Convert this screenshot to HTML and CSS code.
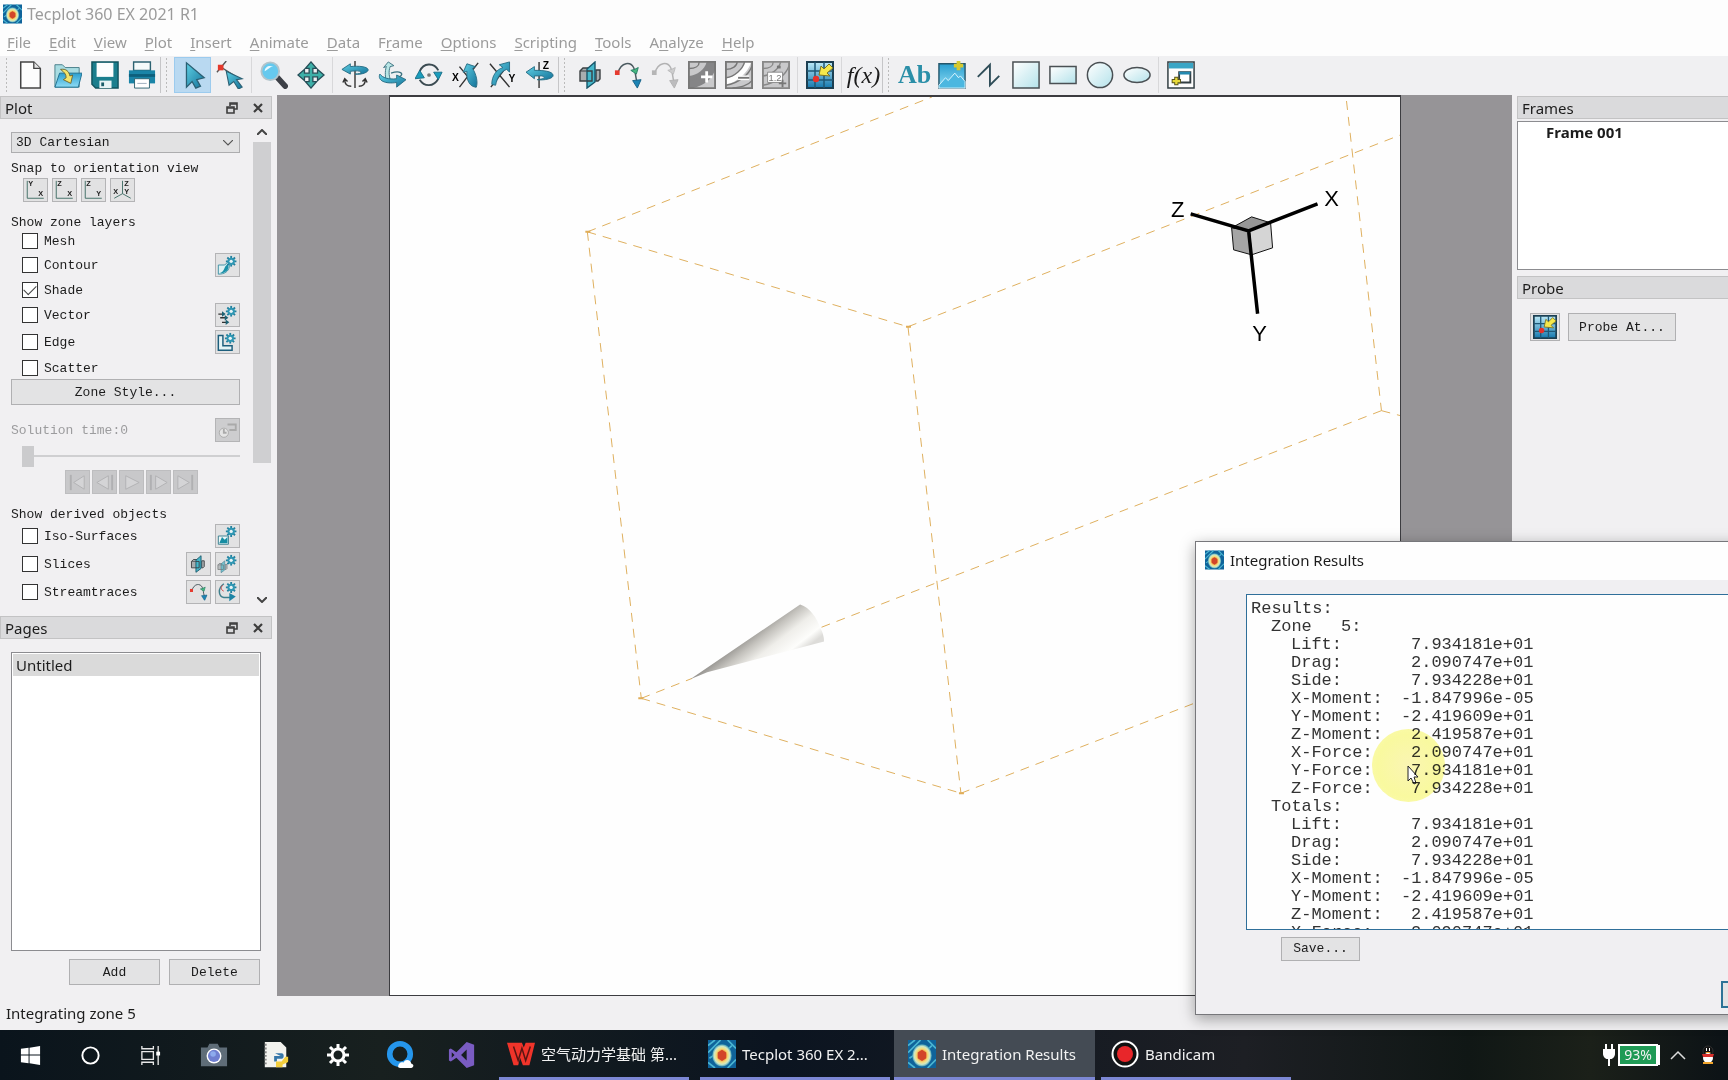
FILE: index.html
```html
<!DOCTYPE html>
<html lang="en">
<head>
<meta charset="utf-8">
<title>Tecplot 360 EX 2021 R1</title>
<link rel="stylesheet" href="styles.css">
</head>
<body>
<svg class="defs" width="0" height="0" aria-hidden="true">
  <defs>
    <linearGradient id="teal" x1="0" y1="0" x2="1" y2="1"><stop offset="0" stop-color="#5fd0e4"/><stop offset="1" stop-color="#14739a"/></linearGradient>
    <linearGradient id="pale" x1="0" y1="0" x2="1" y2="1"><stop offset="0" stop-color="#ffffff"/><stop offset="1" stop-color="#b4e2ea"/></linearGradient>
    <linearGradient id="grid" x1="0" y1="0" x2="0" y2="1"><stop offset="0" stop-color="#bdeaf8"/><stop offset="1" stop-color="#1478ae"/></linearGradient>
    <linearGradient id="sky" x1="0" y1="0" x2="0" y2="1"><stop offset="0" stop-color="#2a9fd0"/><stop offset="1" stop-color="#8fdcf4"/></linearGradient>
    <radialGradient id="glow"><stop offset="0" stop-color="#e0602c"/><stop offset=".4" stop-color="#f09a3c"/><stop offset=".6" stop-color="#f6dc7c"/><stop offset=".8" stop-color="#cfe8c4"/><stop offset="1" stop-color="#3a98b8"/></radialGradient>
  </defs>
  <symbol id="logo" viewBox="0 0 20 20"><rect width="20" height="20" fill="#0f639a"/><path d="M0 4L5 0M0 9L9 0M20 6L14 0M0 16L5 20M20 14L14 20M1 13L4 11M17 4L15 6" stroke="#4bb6d2" stroke-width="1.2"/><ellipse cx="10" cy="11" rx="7" ry="8" fill="url(#glow)"/><path d="M10 7l3 2v4l-3 2-3-2V9z" fill="#d2452a"/></symbol>
  <symbol id="gear" viewBox="0 0 12 12"><g stroke="#23819e" stroke-width="2"><path d="M6 0v12M0 6h12M1.800 1.800l8.400 8.400M10.200 1.800l-8.400 8.400"/></g><circle cx="6" cy="6" r="4" fill="#2f97b4"/><circle cx="6" cy="6" r="1.800" fill="#e8f4f6"/></symbol>
  <symbol id="slice" viewBox="0 0 28 28"><path d="M3 10l3-3h6v13H3zM19 9h4v9l-2 2h-2z" fill="#a9adaf" stroke="#3a3f42" stroke-width="1.400"/><path d="M3 10h8M11 10l2-3" stroke="#3a3f42" fill="none"/><path d="M10 8l8-7v20l-8 6z" fill="#45b8cb" stroke="#17566a" stroke-width="1.400"/><path d="M10 10h5v10h-5" fill="none" stroke="#3a3f42" stroke-width="1.400"/></symbol>
  <symbol id="stream" viewBox="0 0 30 28"><path d="M4 12C8-1 18 0 21 6s1 8 4 16" fill="none" stroke="#4b5a60" stroke-width="1.600"/><path d="M18 9l6 4 2-7-4 2z" fill="#45b87f" stroke="#287e66"/><path d="M20 20l9-1-4 9z" fill="#1c84b5" stroke="#156288"/><rect x="1" y="9" width="5" height="5" fill="#e53b30"/></symbol>
  <symbol id="probe" viewBox="0 0 28 28"><rect x="1" y="1" width="26" height="26" fill="url(#grid)" stroke="#1c3f52" stroke-width="2"/><path d="M9 1v26M18 1v26M1 10h26M1 19h26" stroke="#1f5876" stroke-width="1.500"/><circle cx="10" cy="18" r="3.200" fill="#e5322b"/><path d="M13 14l2-9 3 3 5-5 4 4-6 5 3 3z" fill="#f5e84b" stroke="#7b7324"/></symbol>
  <symbol id="restore" viewBox="0 0 12 12"><path d="M4 4V1h7v6H8" fill="none" stroke="#3c3c3c" stroke-width="1.600"/><path d="M1 5h7v6H1z" fill="none" stroke="#3c3c3c" stroke-width="1.600"/><path d="M1 6h7M4 2h7" stroke="#3c3c3c" stroke-width="1.500"/></symbol>
  <symbol id="cross" viewBox="0 0 12 12"><path d="M2 2l8 8M10 2l-8 8" stroke="#3c3c3c" stroke-width="2.200"/></symbol>
</svg>

<div class="app">
  <header class="titlebar">
    <svg class="logo" aria-hidden="true"><use href="#logo"/></svg>
    <span>Tecplot 360 EX 2021 R1</span>
  </header>

  <nav class="menubar">
    <button><u>F</u>ile</button><button><u>E</u>dit</button><button><u>V</u>iew</button><button><u>P</u>lot</button><button><u>I</u>nsert</button><button><u>A</u>nimate</button><button><u>D</u>ata</button><button>F<u>r</u>ame</button><button><u>O</u>ptions</button><button><u>S</u>cripting</button><button><u>T</u>ools</button><button>A<u>n</u>alyze</button><button><u>H</u>elp</button>
  </nav>

  <div class="toolbar">
    <i class="grip first"></i>
    <button aria-label="New"><svg viewBox="0 0 30 30"><path d="M4 1h14l7 7v21H4z" fill="#fdfdfd" stroke="#444" stroke-width="1.600"/><path d="M18 1v7h7" fill="#e4e4e4" stroke="#444" stroke-width="1.400"/></svg></button>
    <button aria-label="Open"><svg viewBox="0 0 30 30"><path d="M1 28V4h8l3 3h15v21z" fill="#a8dce2" stroke="#467c88"/><path d="M1 28l5-15h24l-4 15z" fill="url(#sky)" stroke="#1d6e8f"/><path d="M7 9c6-1 9 2 10 7l3-1-2 9-8-4 3-2c0-4-2-6-6-9z" fill="#f3e36a" stroke="#6b6530"/></svg></button>
    <button aria-label="Save"><svg viewBox="0 0 30 30"><path d="M1 1h28v28H5l-4-4z" fill="#1b7e8d" stroke="#11535e" stroke-width="1.500"/><path d="M6 2h18v15H6z" fill="#fdfdfd"/><path d="M9 21h13v8H9z" fill="#e9f4f5"/><path d="M11 23h3v4h-3z" fill="#1b5d69"/></svg></button>
    <button aria-label="Print"><svg viewBox="0 0 30 30"><path d="M6 1h18v9H6z" fill="#f4fafa" stroke="#2c6271" stroke-width="1.500"/><path d="M1 10h28v14H1z" fill="#1984a7"/><path d="M1 14h28v3H1z" fill="#0d5f7c"/><path d="M7 19h16v10H7z" fill="#fff" stroke="#2c6271"/><path d="M10 24h10" stroke="#9ab"/></svg></button>
    <i class="grip"></i>
    <button class="on" aria-label="Select"><svg viewBox="0 0 30 30"><path d="M8 2v26l6-6 4 7 5-2-4-7 8-2z" fill="url(#teal)" stroke="#2b6074" stroke-width="1.400"/></svg></button>
    <button aria-label="Adjust"><svg viewBox="0 0 30 30"><path d="M1 12L11 0M6 7L20 16" stroke="#555" stroke-width="1.500"/><rect x="2" y="4" width="6" height="6" fill="#e3382b"/><path d="M11 11l17 8-6 1 6 8-4 2-5-8-5 4z" fill="url(#teal)" stroke="#2b6074" stroke-width="1.200"/></svg></button>
    <i class="sep"></i>
    <button aria-label="Zoom"><svg viewBox="0 0 30 30"><path d="M19 18l8 9" stroke="#3d4047" stroke-width="6" stroke-linecap="round"/><circle cx="11" cy="11" r="9.500" fill="#66c9ee" stroke="#b2c4cb" stroke-width="2"/><path d="M5 11c0-5 5-7 9-5-3 0-6 4-9 5z" fill="#e8faff"/></svg></button>
    <button aria-label="Pan"><svg viewBox="0 0 30 30"><path d="M15 1l6 7h-4v5h5V9l7 6-7 6v-4h-5v5h4l-6 7-6-7h4v-5H8v4l-7-6 7-6v4h5V8H9z" fill="#3db0a8" stroke="#274e58" stroke-width="1.400"/></svg></button>
    <i class="sep"></i>
    <button aria-label="Rotate spherical"><svg viewBox="0 0 30 30"><path d="M15 0v29" stroke="#333" stroke-width="1.500"/><path d="M1 9l9-6v3c9-1 18 0 19 3s-7 6-14 5c6 0 8-2 5-3s-7 0-10 0v3z" fill="url(#teal)" stroke="#276d84"/><path d="M11 27c-5 0-7-3-7-7M19 27c5 0 7-3 7-7M2 23l2-4 3 3M23 22l3-3 2 4" fill="none" stroke="#333" stroke-width="1.500"/></svg></button>
    <button aria-label="Rotate rollerball"><svg viewBox="0 0 30 30"><path d="M9 23C7 15 8 8 9 6L6 7l5-6 6 4-4 1c-2 6-1 11 1 16z" fill="#b8e6e6" stroke="#3b7280"/><path d="M2 14c-3 7 6 11 18 9v5l10-8-10-5v4c-9 1-15-1-18-5z" fill="url(#teal)" stroke="#276d84"/><path d="M14 13c9-3 15 0 9 4" fill="none" stroke="#3b7280" stroke-width="1.500"/></svg></button>
    <button aria-label="Rotate twist"><svg viewBox="0 0 30 30"><path d="M5 11C9 2 20 1 25 10M25 19C20 28 10 28 5 20" fill="none" stroke="#3b4b52" stroke-width="2"/><path d="M0 19l5-9 5 8zM20 12l9 0-4 8z" fill="#1a9dbd" stroke="#1a6f88"/><circle cx="15" cy="15" r="2" fill="#777"/></svg></button>
    <button aria-label="Rotate X"><svg viewBox="0 0 30 30"><path d="M8 28L28 2M8 6l18 22" stroke="#333" stroke-width="1.500"/><path d="M12 12l4-9 9 3-3 2c4 6 6 15 4 20-7 0-11-8-10-17z" fill="url(#teal)" stroke="#276d84"/><text class="axis" x="0" y="21">X</text></svg></button>
    <button aria-label="Rotate Y"><svg viewBox="0 0 30 30"><path d="M1 3l21 25M2 28L22 2" stroke="#333" stroke-width="1.500"/><path d="M3 25C3 16 8 9 15 7l-4-3 11-3v11l-3-3c-6 2-10 8-12 17z" fill="url(#teal)" stroke="#276d84"/><text class="axis" x="21" y="22">Y</text></svg></button>
    <button aria-label="Rotate Z"><svg viewBox="0 0 30 30"><path d="M14 1v28" stroke="#333" stroke-width="1.500"/><path d="M0 12l9-6v4c10 0 19 1 20 5s-10 6-17 5c8-1 10-3 5-4H9v3z" fill="url(#teal)" stroke="#276d84"/><text class="axis" x="18" y="9">Z</text></svg></button>
    <i class="grip"></i>
    <button aria-label="Slice"><svg><use href="#slice"/></svg></button>
    <button aria-label="Streamtrace"><svg><use href="#stream"/></svg></button>
    <button class="dim" aria-label="Streamtrace termination"><svg><use href="#stream"/></svg></button>
    <button aria-label="Contour add"><svg viewBox="0 0 30 30"><path d="M1 1h28v28H1z" fill="#c9c9cb"/><path d="M1 20C13 18 23 10 26 1h3v9C25 20 18 26 6 29H1z" fill="#858587"/><path d="M1 16C10 15 18 9 20 1h7c-3 10-10 17-26 21z" fill="#858587"/><path d="M1 8C8 8 12 5 12 1" fill="none" stroke="#777" stroke-width="1.500"/><path d="M20 11v12M14 17h12" stroke="#fff" stroke-width="3"/><path d="M1 1h28v28H1z" fill="none" stroke="#777" stroke-width="2"/></svg></button>
    <button aria-label="Contour remove"><svg viewBox="0 0 30 30"><path d="M1 1h28v28H1z" fill="#c9c9cb"/><path d="M1 22C12 20 22 10 25 1" fill="none" stroke="#fff" stroke-width="6"/><path d="M1 9C8 9 13 5 13 1M1 18C10 17 19 9 21 1M1 26C15 24 26 14 29 5M8 29c8-1 16-2 21-8" fill="none" stroke="#777" stroke-width="1.500"/><path d="M14 18h12" stroke="#fff" stroke-width="5"/><path d="M14 18h12" stroke="#777" stroke-width="2"/><path d="M1 1h28v28H1z" fill="none" stroke="#777" stroke-width="2"/></svg></button>
    <button aria-label="Contour label"><svg viewBox="0 0 30 30"><path d="M1 1h28v28H1z" fill="#c9c9cb"/><path d="M1 8C8 8 12 5 12 1M1 16C10 15 18 9 20 1M1 26C15 24 26 14 29 5" fill="none" stroke="#888" stroke-width="1.500"/><path d="M16 5h4v3h-4z" fill="#777"/><path d="M6 12h16v11H6z" fill="#fff" stroke="#888"/><text class="mini" x="7" y="21">1.2</text><path d="M22 20v8M18 24h8" stroke="#777" stroke-width="2"/><path d="M1 1h28v28H1z" fill="none" stroke="#888" stroke-width="2"/></svg></button>
    <i class="sep"></i>
    <button aria-label="Probe"><svg><use href="#probe"/></svg></button>
    <i class="sep"></i>
    <button class="fx">f(x)</button>
    <i class="grip"></i>
    <button class="ab">Ab</button>
    <button aria-label="Image"><svg viewBox="0 0 30 30"><path d="M1 3h28v26H1z" fill="url(#sky)" stroke="#24566b" stroke-width="1.500"/><path d="M1 26l7-8 3 3 7-8 4 5 2-2 5 6v7H1z" fill="#4bb7e0" stroke="#dff6ff"/><path d="M22 0v10M17 5h10" stroke="#d6c92f" stroke-width="4"/></svg></button>
    <button aria-label="Polyline"><svg viewBox="0 0 30 30"><path d="M3 17L16 4v22l10-10" fill="none" stroke="#2f4d58" stroke-width="2"/></svg></button>
    <button aria-label="Square"><svg viewBox="0 0 30 30"><path d="M1 1h28v28H1z" fill="url(#pale)" stroke="#4a5054" stroke-width="1.600"/></svg></button>
    <button aria-label="Rectangle"><svg viewBox="0 0 30 30"><path d="M1 6h28v18H1z" fill="url(#pale)" stroke="#4a5054" stroke-width="1.600"/></svg></button>
    <button aria-label="Circle"><svg viewBox="0 0 30 30"><circle cx="15" cy="15" r="13.500" fill="url(#pale)" stroke="#4a5054" stroke-width="1.600"/></svg></button>
    <button aria-label="Ellipse"><svg viewBox="0 0 30 30"><ellipse cx="15" cy="15" rx="14" ry="8" fill="url(#pale)" stroke="#4a5054" stroke-width="1.600"/></svg></button>
    <i class="sep"></i>
    <button aria-label="New frame"><svg viewBox="0 0 30 30"><path d="M1 1h28v28H1z" fill="#fdfdfd" stroke="#333f44" stroke-width="1.600"/><path d="M2 2h26v6H2z" fill="#3aa5c5"/><path d="M13 12h12v11H13z" fill="#fff" stroke="#333f44" stroke-width="2"/><path d="M13 13h12" stroke="#2389b0" stroke-width="3"/><path d="M10 17v9M5 21.500h10" stroke="#56521a" stroke-width="4.500"/><path d="M10 18v7M6 21.500h8" stroke="#e8da3a" stroke-width="2.500"/></svg></button>
  </div>

  <main class="workspace">
    <aside class="dock left">
      <section class="plot">
        <h2><span>Plot</span><button aria-label="Float"><svg><use href="#restore"/></svg></button><button aria-label="Close"><svg><use href="#cross"/></svg></button></h2>
        <div class="scroller">
          <div class="controls">
            <div class="combo">
              <select aria-label="Plot type"><option>3D Cartesian</option></select>
              <svg viewBox="0 0 10 6" aria-hidden="true"><path d="M0 0l5 5 5-5" fill="none" stroke="#555" stroke-width="1.200"/></svg>
            </div>
            <p class="caption">Snap to orientation view</p>
            <div class="snaps">
              <button aria-label="XY view"><svg viewBox="0 0 24 24"><path d="M3 2v19h18" fill="none" stroke="#3c6a62"/><text x="4" y="8">Y</text><text x="15" y="19">X</text></svg></button>
              <button aria-label="XZ view"><svg viewBox="0 0 24 24"><path d="M3 2v19h18" fill="none" stroke="#3c6a62"/><text x="4" y="8">Z</text><text x="15" y="19">X</text></svg></button>
              <button aria-label="YZ view"><svg viewBox="0 0 24 24"><path d="M3 2v19h18" fill="none" stroke="#3c6a62"/><text x="4" y="8">Z</text><text x="15" y="19">Y</text></svg></button>
              <button aria-label="3D view"><svg viewBox="0 0 24 24"><path d="M12 2v14l-9 5M12 16l9 5" fill="none" stroke="#3c6a62"/><text x="14" y="8">Z</text><text x="2" y="16">X</text><text x="14" y="16">Y</text></svg></button>
            </div>
            <p class="caption next">Show zone layers</p>
            <div class="layers">
              <div class="row"><label><input type="checkbox"><span>Mesh</span></label></div>
              <div class="row"><label><input type="checkbox"><span>Contour</span></label><button class="tool" aria-label="Contour details"><svg viewBox="0 0 24 24"><path d="M2 12h7l5-5v7c-1 5-5 8-12 8z" fill="#dff1f3" stroke="#3a8ea3"/><path d="M3 21c7-1 4-8 10-10v4c-1 4-4 6-10 6z" fill="#1a90a8"/><use href="#gear" x="10" y="2" width="12" height="12"/></svg></button></div>
              <div class="row"><label><input type="checkbox" checked><span>Shade</span></label></div>
              <div class="row"><label><input type="checkbox"><span>Vector</span></label><button class="tool" aria-label="Vector details"><svg viewBox="0 0 24 24"><path d="M2 11h6M4 15h7M6 20h6" stroke="#333" stroke-width="1.500"/><path d="M6 8l4 3-4 3zM9 12l4 3-4 3zM10 17l4 3-4 3z" fill="#1d6274"/><use href="#gear" x="10" y="2" width="12" height="12"/></svg></button></div>
              <div class="row"><label><input type="checkbox"><span>Edge</span></label><button class="tool" aria-label="Edge details"><svg viewBox="0 0 24 24"><path d="M2 5h5v11h10v5H2z" fill="#e6f4f6" stroke="#1d5f7d" stroke-width="1.600"/><use href="#gear" x="9" y="2" width="12" height="12"/></svg></button></div>
              <div class="row"><label><input type="checkbox"><span>Scatter</span></label></div>
            </div>
            <button class="push zone">Zone Style...</button>
            <div class="time"><label for="time">Solution time:0</label><button class="tool off" disabled aria-label="Time details"><svg viewBox="0 0 24 24"><circle cx="8" cy="15" r="5" fill="#e4e4e4" stroke="#aaa"/><path d="M8 11v4h3M12 6h9v6h-7" fill="none" stroke="#aaa" stroke-width="2"/></svg></button></div>
            <input id="time" type="range" min="0" max="10" value="0" disabled>
            <div class="player">
              <button disabled aria-label="First"><svg viewBox="0 0 24 24"><path d="M5 4v16" /><path class="f" d="M19 5v14L8 12z"/></svg></button>
              <button disabled aria-label="Back"><svg viewBox="0 0 24 24"><path d="M20 4v16" /><path class="f" d="M16 5v14L4 12z"/></svg></button>
              <button disabled aria-label="Play"><svg viewBox="0 0 24 24"><path class="f" d="M6 5v14l14-7z"/></svg></button>
              <button disabled aria-label="Forward"><svg viewBox="0 0 24 24"><path d="M4 4v16" /><path class="f" d="M9 5v14l12-7z"/></svg></button>
              <button disabled aria-label="Last"><svg viewBox="0 0 24 24"><path d="M19 4v16" /><path class="f" d="M4 5v14l12-7z"/></svg></button>
            </div>
            <p class="caption next">Show derived objects</p>
            <div class="derived">
              <div class="row"><label><input type="checkbox"><span>Iso-Surfaces</span></label><button class="tool" aria-label="Iso-surface details"><svg viewBox="0 0 24 24"><path d="M2 12h11v9H2z" fill="#eef7f8" stroke="#357c8c"/><path d="M3 20l3-7 3 3 3-3v7z" fill="#168da3"/><use href="#gear" x="10" y="1" width="12" height="12"/></svg></button></div>
              <div class="row"><label><input type="checkbox"><span>Slices</span></label><button class="tool" aria-label="Place slice"><svg viewBox="-4 -3 36 34"><use href="#slice" width="28" height="28"/></svg></button><button class="tool" aria-label="Slice details"><svg viewBox="0 0 24 24"><g opacity=".7"><use href="#slice" x="0" y="8" width="14" height="14"/></g><use href="#gear" x="10" y="2" width="12" height="12"/></svg></button></div>
              <div class="row"><label><input type="checkbox"><span>Streamtraces</span></label><button class="tool" aria-label="Place streamtrace"><svg viewBox="-2 -4 34 36"><use href="#stream" width="30" height="28"/></svg></button><button class="tool" aria-label="Streamtrace details"><svg viewBox="0 0 24 24"><path d="M8 3C1 8 2 17 8 18h9" fill="none" stroke="#3f7f8d" stroke-width="1.600"/><path d="M7 5c-3 0-2 6 1 6" fill="none" stroke="#d05050"/><path d="M14 13l7 4-7 5z" fill="#1c84a5"/><use href="#gear" x="10" y="1" width="12" height="12"/></svg></button></div>
            </div>
          </div>
          <div class="bar" aria-hidden="true">
            <svg viewBox="0 0 10 6"><path d="M0 6l5-5 5 5" fill="none" stroke="#444" stroke-width="2"/></svg>
            <i></i>
            <svg viewBox="0 0 10 6"><path d="M0 0l5 5 5-5" fill="none" stroke="#444" stroke-width="2"/></svg>
          </div>
        </div>
      </section>
      <section class="pages">
        <h2><span>Pages</span><button aria-label="Float"><svg><use href="#restore"/></svg></button><button aria-label="Close"><svg><use href="#cross"/></svg></button></h2>
        <ul class="list"><li>Untitled</li></ul>
        <div class="actions"><button class="push">Add</button><button class="push">Delete</button></div>
      </section>
    </aside>

    <div class="canvas">
      <svg class="page" viewBox="389 96 1012 899" preserveAspectRatio="xMidYMid slice" role="img" aria-label="3D plot">
        <defs>
          <linearGradient id="cone" gradientUnits="userSpaceOnUse" x1="756" y1="629" x2="784" y2="665"><stop offset="0" stop-color="#999793"/><stop offset=".22" stop-color="#c4c2bd"/><stop offset=".5" stop-color="#efeeea"/><stop offset=".82" stop-color="#fdfdfb"/><stop offset="1" stop-color="#dddcd9"/></linearGradient>
        </defs>
        <g fill="none" stroke="#dfb05e" stroke-width="1" stroke-dasharray="9 7">
          <path d="M587 231L932 96"/><path d="M587 231L908 326"/><path d="M587 231L641 698"/><path d="M908 326L961 793"/><path d="M908 326L1401 134"/><path d="M641 698L961 793"/><path d="M961 793L1210 697"/><path d="M1347 100L1382 410"/><path d="M1382 410L1401 415"/><path d="M1382 410L821 627"/><path d="M641 698L692 678"/>
        </g>
        <path d="M585 231h5M906 326h5M638 698h5M959 793h5" stroke="#e0ad58" stroke-width="2"/>
        <path d="M690 679L800 604C810 607 817 618 820 627Q824 634 824 641L707 672z" fill="url(#cone)"/>
        <path d="M1232 227L1252 216L1271 222L1250 230z" fill="#979797" stroke="#111"/>
        <path d="M1232 227L1250 230L1252 254L1234 249z" fill="#a5a5a5" stroke="#111"/>
        <path d="M1250 230L1271 222L1273 247L1252 254z" fill="#d5d5d5" stroke="#111"/>
        <path d="M1191 213L1249 230L1318 203M1249 230L1258 313" fill="none" stroke="#000" stroke-width="3.500"/>
        <g class="labels"><text x="1178" y="216">Z</text><text x="1332" y="205">X</text><text x="1260" y="340">Y</text></g>
      </svg>
    </div>

    <aside class="dock right">
      <section class="frames"><h2><span>Frames</span></h2><ul class="list"><li>Frame 001</li></ul></section>
      <section class="probe"><h2><span>Probe</span></h2><div class="probes"><button class="push" aria-label="Probe tool"><svg><use href="#probe"/></svg></button><button class="push">Probe At...</button></div></section>
    </aside>
  </main>

  <footer class="status">Integrating zone 5</footer>

  <div class="taskbar">
    <div class="system">
      <button class="pin" aria-label="Start"><svg viewBox="0 0 24 24"><path d="M2 5l8-1v7H2zM11 4l11-2v9H11zM2 12h8v8l-8-1zM11 12h11v10l-11-2z" fill="#fff"/></svg></button>
      <button class="pin" aria-label="Search"><svg viewBox="0 0 24 24"><circle cx="12" cy="12" r="8.500" fill="none" stroke="#fff" stroke-width="2"/></svg></button>
      <button class="pin" aria-label="Task view"><svg viewBox="0 0 24 24"><path d="M3 2v3h12V2M3 22v-3h12v3M3 8h12v8H3zM20 2v20" fill="none" stroke="#e8e8e8" stroke-width="1.400"/><path d="M18 8h4v4h-4z" fill="#fff"/></svg></button>
    </div>
    <div class="pinned">
      <button class="pin" aria-label="Camera"><svg viewBox="0 0 30 26"><path d="M1 5h7l2-4h9l2 4h8v20H1z" fill="#5f6d78"/><circle cx="15" cy="14" r="8" fill="#fff"/><circle cx="15" cy="14" r="6.500" fill="#6f7fd0"/><circle cx="14" cy="12" r="3" fill="#8dabed"/></svg></button>
      <button class="pin" aria-label="Python file"><svg viewBox="0 0 30 30"><path d="M3 1h17l6 6v21H3z" fill="#f2f2ee"/><path d="M4 3v24" stroke="#888" stroke-width="2" stroke-dasharray="2 2"/><path d="M14 13h7c3 0 3 6 0 6h-5v3h-3v-6h7" fill="#3676a8"/><path d="M28 17v5c0 2-6 2-6 4v2h-7v-6h6l4-5z" fill="#f2cd3c"/></svg></button>
      <button class="pin" aria-label="Settings"><svg viewBox="-2 -2 28 28"><circle cx="12" cy="12" r="6" fill="none" stroke="#fff" stroke-width="3"/><path d="M12 1v4M12 19v4M1 12h4M19 12h4M4 4l3 3M17 17l3 3M20 4l-3 3M7 17l-3 3" stroke="#fff" stroke-width="3"/></svg></button>
      <button class="pin" aria-label="Browser"><svg viewBox="0 0 30 30"><circle cx="15" cy="14" r="11" fill="none" stroke="#2596ec" stroke-width="6"/><path d="M13 28c0-5 4-6 6-5 2-5 8-2 8 1 4 1 2 5 0 5H15z" fill="#fff"/></svg></button>
      <button class="pin" aria-label="Visual Studio"><svg viewBox="0 0 30 30"><path d="M20 1l8 3v22l-8 3L9 18l-6 4-2-1V9l2-1 6 4zM20 9l-6 6 6 6zM4 12v6l3-3z" fill="#7a5cc2" fill-rule="evenodd"/></svg></button>
    </div>
    <button class="task"><svg viewBox="0 0 30 28"><path d="M0 2h16l2 5 2-5h10l-6 24h-7l-3-8-2 8H7z" fill="#f0342a"/><path d="M7 6l5 15 4-13 4 13 5-15" fill="none" stroke="#5a1512" stroke-width="1.600"/></svg><span>空气动力学基础 第...</span></button>
    <button class="task"><svg><use href="#logo"/></svg><span>Tecplot 360 EX 2...</span></button>
    <button class="task active"><svg><use href="#logo"/></svg><span>Integration Results</span></button>
    <button class="task"><svg viewBox="0 0 28 28"><circle cx="14" cy="14" r="12.500" fill="#111" stroke="#fff" stroke-width="2"/><circle cx="14" cy="14" r="8" fill="#e8262a"/></svg><span>Bandicam</span></button>
    <div class="tray">
      <svg class="plug" viewBox="0 0 12 24"><path d="M3 1v6M9 1v6" stroke="#fff" stroke-width="2"/><path d="M0 6h12v5c0 3-3 5-4 5H4c-1 0-4-2-4-5z" fill="#fff"/><path d="M6 15v8" stroke="#fff" stroke-width="2"/></svg>
      <span class="battery">93%</span>
      <svg class="chevron" viewBox="0 0 16 10"><path d="M1 9l7-7 7 7" fill="none" stroke="#ddd" stroke-width="1.500"/></svg>
      <svg class="penguin" viewBox="0 0 16 20"><ellipse cx="8" cy="6" rx="5" ry="5" fill="#111" stroke="#444" stroke-width=".6"/><path d="M6 3h1v3H6zM9 3h1v3H9z" fill="#fff"/><path d="M5 7h6l-3 2z" fill="#f2a52c"/><ellipse cx="8" cy="13" rx="5" ry="5" fill="#fff"/><path d="M2 9h12l-1 3H3z" fill="#d82f2b"/><path d="M3 18h10" stroke="#f2a52c" stroke-width="2"/></svg>
    </div>
  </div>

  <div class="dialog" role="dialog" aria-label="Integration Results">
    <header><svg class="logo" aria-hidden="true"><use href="#logo"/></svg><span>Integration Results</span></header>
    <textarea readonly wrap="off" aria-label="Results">Results:
&#9;&#9;Zone&#9;&#9;&#9;5:
&#9;&#9;&#9;&#9;Lift:&#9;&#9;&#9;&#9;&#9;&#9;&#9;7.934181e+01
&#9;&#9;&#9;&#9;Drag:&#9;&#9;&#9;&#9;&#9;&#9;&#9;2.090747e+01
&#9;&#9;&#9;&#9;Side:&#9;&#9;&#9;&#9;&#9;&#9;&#9;7.934228e+01
&#9;&#9;&#9;&#9;X-Moment:&#9;&#9;-1.847996e-05
&#9;&#9;&#9;&#9;Y-Moment:&#9;&#9;-2.419609e+01
&#9;&#9;&#9;&#9;Z-Moment:&#9;&#9;&#9;2.419587e+01
&#9;&#9;&#9;&#9;X-Force:&#9;&#9;&#9;&#9;2.090747e+01
&#9;&#9;&#9;&#9;Y-Force:&#9;&#9;&#9;&#9;7.934181e+01
&#9;&#9;&#9;&#9;Z-Force:&#9;&#9;&#9;&#9;7.934228e+01
&#9;&#9;Totals:
&#9;&#9;&#9;&#9;Lift:&#9;&#9;&#9;&#9;&#9;&#9;&#9;7.934181e+01
&#9;&#9;&#9;&#9;Drag:&#9;&#9;&#9;&#9;&#9;&#9;&#9;2.090747e+01
&#9;&#9;&#9;&#9;Side:&#9;&#9;&#9;&#9;&#9;&#9;&#9;7.934228e+01
&#9;&#9;&#9;&#9;X-Moment:&#9;&#9;-1.847996e-05
&#9;&#9;&#9;&#9;Y-Moment:&#9;&#9;-2.419609e+01
&#9;&#9;&#9;&#9;Z-Moment:&#9;&#9;&#9;2.419587e+01
&#9;&#9;&#9;&#9;X-Force:&#9;&#9;&#9;&#9;2.090747e+01</textarea>
    <button class="push save">Save...</button>
    <div class="foot"><button class="push close" aria-label="Close"></button></div>
  </div>

  <div class="pointer" aria-hidden="true"><svg viewBox="0 0 12 20"><path d="M1 1v15l3-3 3 6 2-1-2-6h4z" fill="#fff" stroke="#222"/></svg></div>
</div>
</body>
</html>
```
FILE: styles.css
```css
* { box-sizing: border-box; }
body {
  margin: 0;
  font: 15px/20px "Noto Sans", "Noto Sans CJK SC", sans-serif;
  color: #1c1c1c;
}
button, select, input, textarea { font: inherit; color: inherit; margin: 0; padding: 0; border: 0; background: none; }
h2, p, ul { margin: 0; padding: 0; font-weight: normal; list-style: none; }
svg { display: block; }
.defs { position: absolute; }

.app {
  position: relative;
  display: flex;
  flex-direction: column;
  height: 100vh;
  overflow: hidden;
  background: #f1f0f2;
}
.logo { width: 19px; height: 20px; flex: none; }

.titlebar, .menubar { height: 28px; flex: none; display: flex; align-items: center; background: #fdfdfd; color: #9b9b9b; }
.titlebar { gap: 5px; padding-left: 3px; font-size: 16px; }
.menubar { gap: 18px; padding-left: 7px; }
.menubar u { text-underline-offset: 2px; }

.toolbar { height: 39px; flex: none; display: flex; align-items: center; padding-bottom: 2px; background: #f0f0f2; }
.toolbar button { width: 37px; height: 36px; flex: none; display: grid; place-items: center; }
.toolbar button svg { width: 28px; height: 28px; }
.toolbar .on { background: #b9d9f1; border: 1px solid #9ccbee; }
.toolbar .dim { filter: grayscale(1); opacity: .4; }
.grip { width: 14px; height: 36px; flex: none; border-left: 1px solid #c6c6c8; background: radial-gradient(circle, #bbb 1px, transparent 1px) 4px 0 / 3px 4px repeat-y; }
.grip.first { width: 12px; border-color: transparent; }
.sep { width: 7px; height: 36px; flex: none; background: linear-gradient(#d8d8da, #d8d8da) center / 1px 100% no-repeat; }
.axis { font: bold 11px "Liberation Sans", sans-serif; }
.mini { font: 10px "Liberation Sans", sans-serif; fill: #777; }
.toolbar .fx { font: italic 24px/30px "Liberation Serif", serif; }
.toolbar .ab { font: bold 26px/30px "Liberation Serif", serif; color: #2b8fa8; }

.workspace { flex: 1; min-height: 0; display: flex; }
.dock { flex: none; display: flex; flex-direction: column; padding-top: 1px; }
.left { width: 277px; padding-right: 5px; }
.right { width: 216px; padding-left: 5px; }
.dock h2 {
  height: 23px;
  display: flex;
  align-items: center;
  gap: 14px;
  padding: 0 7px 0 4px;
  font-size: 15px;
  line-height: 20px;
  border: 1px solid #c3c3c4;
  background: #dadadc;
}
.dock h2 span { flex: 1; }
.dock h2 svg { width: 12px; height: 12px; }
.dock.right h2 { border-right: 0; }

.scroller { display: flex; justify-content: space-between; padding: 13px 0 10px 11px; }
.controls { width: 229px; font: 13px/16px "Liberation Mono", monospace; }
.combo { display: grid; align-items: center; height: 21px; margin-bottom: 8px; border: 1px solid #adadaf; background: #e2e2e3; }
.combo > * { grid-area: 1 / 1; }
.combo select { appearance: none; padding: 1px 0 0 4px; width: 100%; }
.combo svg { width: 10px; height: 6px; justify-self: end; margin-right: 6px; pointer-events: none; }
.caption { height: 14px; }
.next { margin-top: 13px; }
.snaps { display: flex; gap: 4px; margin: 3px 0 0 12px; }
.snaps button, .tool { width: 25px; height: 24px; border: 1px solid #b4b4b6; background: #e2e2e3; }
.snaps svg, .tool svg { width: 100%; height: 100%; }
.snaps text { font: bold 8px "Liberation Sans", sans-serif; fill: #222; }
.layers { display: grid; grid-template-rows: 23px 25px 25px 25px 29px 23px; }
.derived { display: grid; grid-auto-rows: 28px; margin-top: 1px; }
.row { display: flex; align-items: center; gap: 4px; padding-left: 11px; }
.row label { flex: 1; display: flex; align-items: center; gap: 6px; }
.row span { padding-top: 2px; }
.row input { appearance: none; width: 16px; height: 16px; border: 1px solid #333; background: #fff; }
.row input:checked { display: grid; place-items: center; }
.row input:checked::after { content: ""; width: 11px; height: 6px; border: solid #444; border-width: 0 0 1px 1px; rotate: -45deg; translate: 0 -1px; }
.push { padding-top: 2px; border: 1px solid #b0b0b2; background: #e3e3e4; font: 13px/16px "Liberation Mono", monospace; }
.zone { width: 100%; height: 26px; display: block; }
.time { display: flex; justify-content: space-between; align-items: center; margin-top: 13px; color: #9c9c9e; }
.time label { padding-top: 2px; }
.off { background: #cdcdcf; }
#time { appearance: none; display: block; width: 218px; height: 22px; margin: 3px 0 0 11px; background: linear-gradient(#cfcfd1, #cfcfd1) center / 100% 2px no-repeat; }
#time::-webkit-slider-thumb { appearance: none; width: 12px; height: 21px; background: #cbcbcd; }
.player { display: flex; gap: 2px; margin: 3px 0 0 54px; }
.player button { width: 25px; height: 24px; background: #c8c8ca; border: 1px solid #bdbdbf; }
.player path { fill: none; stroke: #b0b0b2; stroke-width: 2; }
.player .f { fill: #d4d4d6; stroke: #b2b2b4; stroke-width: 1; }
.bar { width: 20px; margin: -4px 0 -5px; padding-top: 1px; display: flex; flex-direction: column; align-items: center; }
.bar svg { width: 10px; height: 6px; flex: none; }
.bar i { width: 18px; height: 321px; margin: 7px 0 auto; background: #cfcfd1; }
.bar svg:last-child { margin-bottom: 8px; }

.pages { flex: 1; display: flex; flex-direction: column; }
.list { background: #fff; border: 1px solid #8c8c90; }
.pages .list { flex: 1; margin: 13px 11px 8px; padding: 1px; }
.pages li { padding: 0 3px; height: 22px; line-height: 22px; background: #dadada; }
.actions { display: flex; justify-content: flex-end; gap: 9px; padding: 0 12px 11px; }
.actions button { width: 91px; height: 26px; }

.canvas { flex: 1; min-width: 0; padding: 0 111px 0 112px; background: #969497; }
.page { width: 100%; height: 100%; background: #fefefe; border: 1px solid #3c3c40; border-top-width: 2px; }
.labels text { font: 22px "Liberation Sans", sans-serif; text-anchor: middle; }

.frames .list { height: 149px; margin: 2px 0 6px; padding-left: 28px; border-right: 0; }
.frames li { font-weight: bold; line-height: 20px; }
.probes { display: flex; gap: 8px; padding: 14px 0 0 13px; }
.probes .push { width: 108px; height: 28px; }
.probes .push:first-child { width: 30px; padding: 0; display: grid; place-items: center; }
.probes svg { width: 24px; height: 24px; }

.status { height: 34px; flex: none; padding-left: 6px; line-height: 34px; }

.taskbar { height: 50px; flex: none; display: flex; align-items: stretch; background: linear-gradient(90deg, #0a141c, #18201f 22%, #0b1420 45%, #1d1f24 72%, #101715 85%, #1b2019 92%, #0c1216); color: #f2f2f2; }
.system, .pinned { display: flex; }
.pin { width: 60px; display: grid; place-items: center; }
.pin svg { width: 23px; height: 23px; }
.pinned { margin: 0 6px 0 3px; }
.pinned .pin { width: 62px; }
.pinned svg { width: 28px; height: 28px; }
.task { width: 190px; margin-left: 11px; display: flex; align-items: center; gap: 6px; padding-left: 8px; white-space: nowrap; border-bottom: 3px solid #7c87d4; }
.task svg { width: 28px; height: 28px; flex: none; }
.pinned + .task { margin-left: 0; }
.task.active { width: 201px; margin-left: 4px; padding-left: 14px; background: #444b54; }
.active + .task { margin-left: 6px; padding-left: 10px; }
.tray { margin-left: auto; display: flex; align-items: center; padding-right: 11px; }
.plug { width: 12px; height: 24px; margin-right: 3px; }
.battery { width: 40px; height: 22px; border: 2px solid #fff; background: #1f9a55; font-size: 14px; line-height: 18px; text-align: center; box-shadow: 3px 0 0 -1px #fff; }
.chevron { width: 16px; height: 10px; margin: 0 13px 0 12px; }
.penguin { width: 18px; height: 20px; }

.dialog {
  position: absolute;
  top: 541px;
  left: 1195px;
  width: 640px;
  height: 474px;
  display: flex;
  flex-direction: column;
  align-items: flex-start;
  background: #f0eff2;
  border: 1px solid #77777b;
  box-shadow: 0 4px 14px rgba(0, 0, 0, .35);
}
.dialog header { align-self: stretch; height: 38px; display: flex; align-items: center; gap: 6px; padding: 0 0 2px 9px; background: #fefefe; }
.dialog textarea {
  width: 560px;
  height: 336px;
  margin: 14px 0 0 50px;
  padding: 5px 4px 0;
  border: 1px solid #2f6f9a;
  background: #fefefe;
  font: 17px/18px "Liberation Mono", monospace;
  color: #333;
  tab-size: 10px;
  resize: none;
  overflow: hidden;
}
.dialog .save { width: 79px; height: 24px; margin: 7px 0 0 85px; padding: 0; }
.foot { align-self: stretch; display: flex; justify-content: flex-end; padding: 20px 20px 0 0; }
.close { width: 93px; height: 27px; border: 2px solid #2d7397; }

.pointer { position: absolute; left: 1372px; top: 729px; width: 73px; height: 73px; border-radius: 50%; background: radial-gradient(circle, #fbf6b4, #fafaa0 60%, #fcfcb4); mix-blend-mode: multiply; display: grid; place-items: center; }
.pointer svg { width: 12px; height: 20px; margin: 18px 0 0 8px; }
```
